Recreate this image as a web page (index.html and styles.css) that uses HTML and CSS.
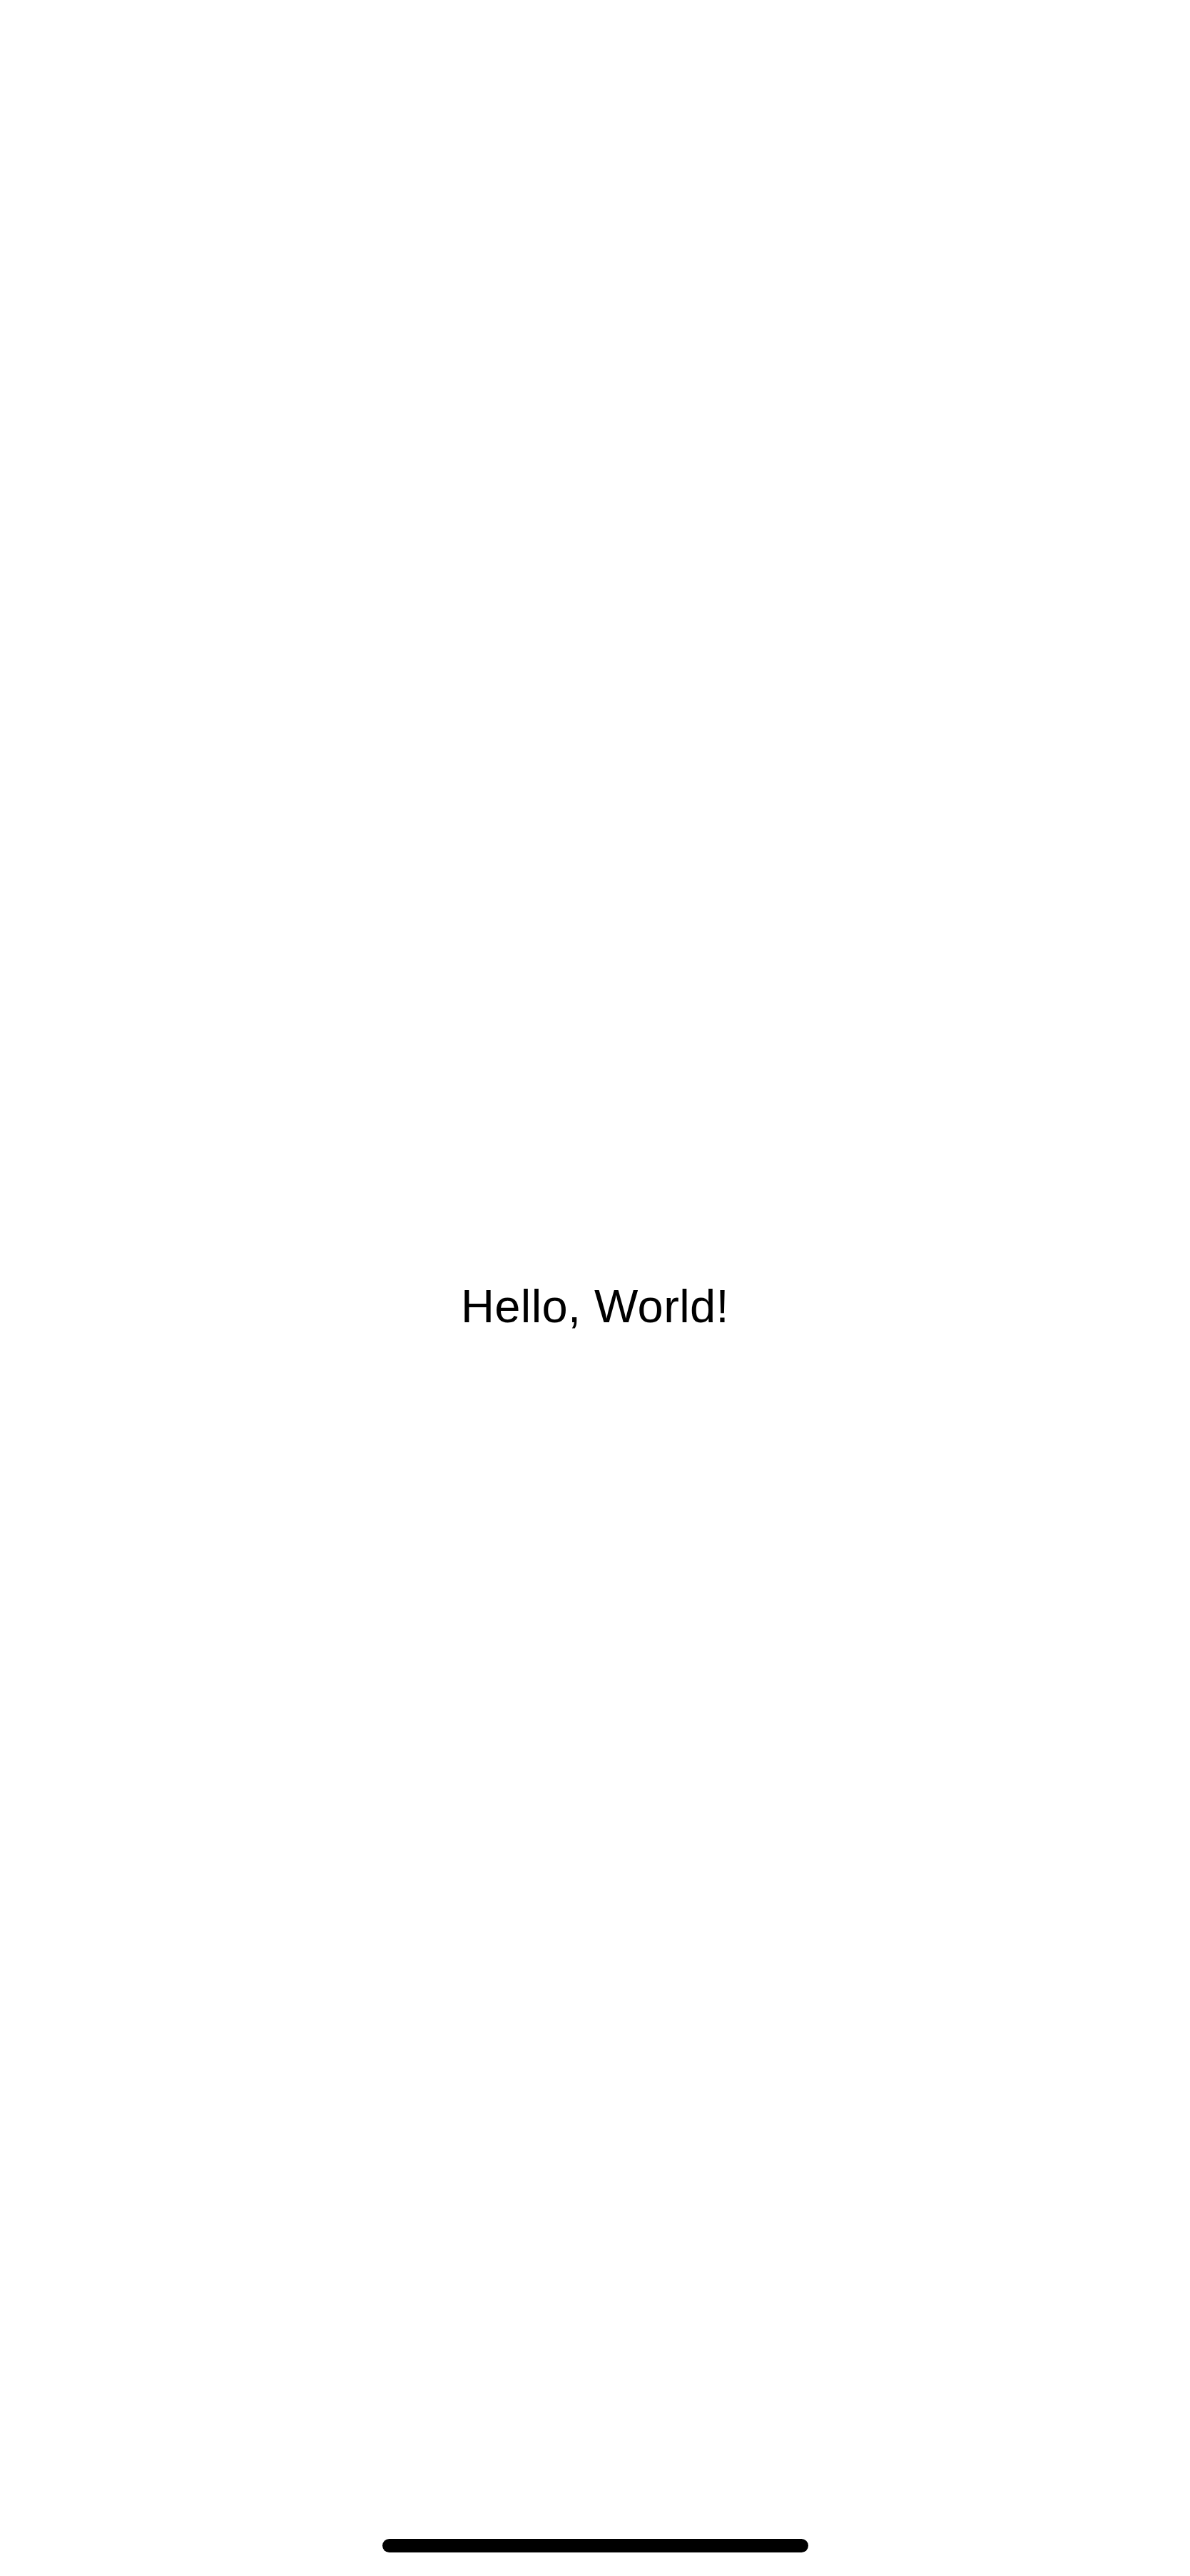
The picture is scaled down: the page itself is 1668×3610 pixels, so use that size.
FILE: index.html
```html
<!DOCTYPE html>
<html lang="en">
<head>
<meta charset="utf-8">
<title>Hello</title>
<link rel="stylesheet" href="styles.css">
</head>
<body>
<div class="screen">
  <main class="content">
    <p class="greeting">Hello, World!</p>
  </main>
  <div class="home-indicator"></div>
</div>
</body>
</html>
```

FILE: styles.css
```css
html, body {
  margin: 0;
  padding: 0;
  background: #ffffff;
}

.screen {
  height: 3610px;
  display: flex;
  flex-direction: column;
  align-items: center;
  background: #ffffff;
  font-family: "Liberation Sans", Arial, sans-serif;
  color: #000000;
}

.content {
  flex: 1;
  width: 100%;
  display: flex;
  justify-content: center;
  padding-top: 1798px;
  box-sizing: border-box;
}

.greeting {
  margin: 0;
  font-size: 65px;
  line-height: 65px;
  height: 65px;
  letter-spacing: 0.4px;
}

.home-indicator {
  width: 597px;
  height: 19px;
  border-radius: 10px;
  background: #000000;
  margin-bottom: 33px;
}
```
